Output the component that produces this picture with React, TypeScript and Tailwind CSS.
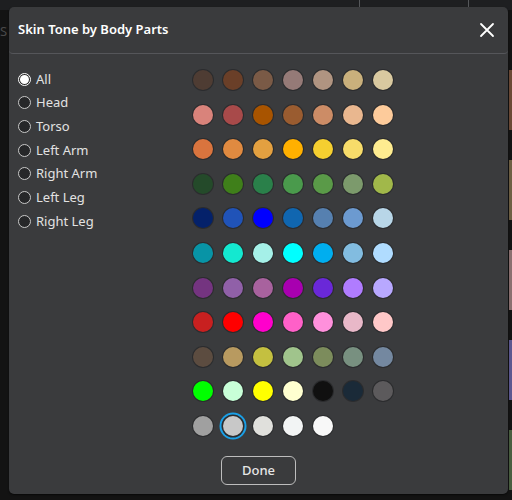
import * as React from "react";

const parts = ["All", "Head", "Torso", "Left Arm", "Right Arm", "Left Leg", "Right Leg"];

const swatches = [
  ["#4e3c33", "#6a3f28", "#7a5a46", "#957a77", "#b09481", "#c9b07c", "#d9c9a0"],
  ["#d9837b", "#a84a4a", "#a85400", "#9a5c30", "#cc8c66", "#e9b78f", "#fdcb9b"],
  ["#d9743e", "#e08a40", "#e3a040", "#ffb000", "#f5cf30", "#f7dc6a", "#feec90"],
  ["#244a2a", "#3f7f1a", "#2a804a", "#4a9a4c", "#5a9a48", "#7c9a6c", "#a1b84a"],
  ["#04216a", "#2053b8", "#0000ff", "#1066b0", "#5680b0", "#6c9ad0", "#b8d6e8"],
  ["#0894a6", "#14e8d0", "#a5f0e8", "#00ffff", "#00aeef", "#82bce0", "#b0dcff"],
  ["#743480", "#9060a8", "#a8629e", "#a800b0", "#6a28d8", "#b07cff", "#b8a8ff"],
  ["#c82020", "#ff0000", "#ff00cc", "#ff60c8", "#ff90dc", "#e8b8c8", "#ffc8c8"],
  ["#5c4c40", "#b89a60", "#c4c040", "#a0c48c", "#7c8c5c", "#789080", "#7488a0"],
  ["#00ff00", "#c8ffd8", "#ffff00", "#ffffd0", "#101010", "#1a2a38", "#5c5a5c"],
  ["#a0a0a0", "#c8c8c8", "#e0e0dc", "#f2f4f4", "#f8f8f8"],
];

const stripes = ["#6b4a36", "#6e5f44", "#8a7070", "#5c5890", "#4a5e40"];

function Radio({ label, checked }: { label: string; checked?: boolean }) {
  return (
    <label className="flex h-[23.66px] items-center gap-[5px]">
      {checked ? (
        <span className="flex h-[13px] w-[13px] items-center justify-center rounded-full border border-white bg-[#2a2a2a]">
          <span className="h-[9px] w-[9px] rounded-full bg-white" />
        </span>
      ) : (
        <span className="h-[13px] w-[13px] rounded-full border border-[#c8c8c8] bg-[#262729]" />
      )}
      <span className="text-[13px] text-[#e2e2e2]">{label}</span>
    </label>
  );
}

export default function App() {
  const [selected] = React.useState("10-1");
  return (
    <div
      className="relative h-[500px] w-[512px] overflow-hidden bg-[#131313]"
      style={{ fontFamily: '"Noto Sans", "Open Sans", sans-serif' }}
    >
      {/* app behind the dialog */}
      <div className="flex h-[10px] bg-[#1e1f21]">
        <div className="w-[359px]" />
        <div className="w-[110px] border-x border-[#55575a]" />
      </div>
      <div className="flex">
        <div className="w-[9px] pt-[12px] text-[13px] text-[#4a4a4a]">S</div>
        <div className="ml-auto flex w-[3px] flex-col pt-[60px]">
          {stripes.map((c) => (
            <div key={c} className="mb-[30px] h-[60px]" style={{ background: c }} />
          ))}
        </div>
      </div>

      {/* dialog */}
      <div className="absolute left-[9px] top-[7px] flex h-[487px] w-[499px] flex-col rounded-[5px] bg-[#3a3b3d] shadow-[0_1px_2px_rgba(0,0,0,0.6)]">
        <div className="flex h-[47px] shrink-0 items-center justify-between rounded-b-[4px] border-b border-[#55565a] pl-[9px] pr-[13px]">
          <h2 className="text-[13px] font-semibold text-white">Skin Tone by Body Parts</h2>
          <svg width="16" height="16" viewBox="0 0 16 16" className="text-white">
            <path d="M2 2 L14 14 M14 2 L2 14" stroke="currentColor" strokeWidth="1.8" strokeLinecap="round" />
          </svg>
        </div>

        <div className="flex pl-[9px] pt-[16px]">
          <div className="-mt-[2.5px] flex w-[175px] flex-col">
            {parts.map((p, i) => (
              <Radio key={p} label={p} checked={i === 0} />
            ))}
          </div>
          <div className="grid grid-cols-7 gap-x-[10px] gap-y-[14.6px]">
            {swatches.map((row, r) =>
              row.map((c, i) => (
                <span
                  key={`${r}-${i}`}
                  className={
                    selected === `${r}-${i}`
                      ? "h-5 w-5 rounded-full shadow-[0_0_0_1.5px_#2b2c2e,0_0_0_3.5px_#1a9fe6]"
                      : "h-5 w-5 rounded-full shadow-[0_0_0_1px_#2b2c2e]"
                  }
                  style={{ background: c }}
                />
              ))
            )}
          </div>
        </div>

        <div className="mt-[20px] flex justify-center">
          <button className="h-[29px] w-[75px] rounded-[6px] border border-[#bdbdbd] text-[13px] font-medium text-[#e6e6e6]">
            Done
          </button>
        </div>
      </div>
    </div>
  );
}
